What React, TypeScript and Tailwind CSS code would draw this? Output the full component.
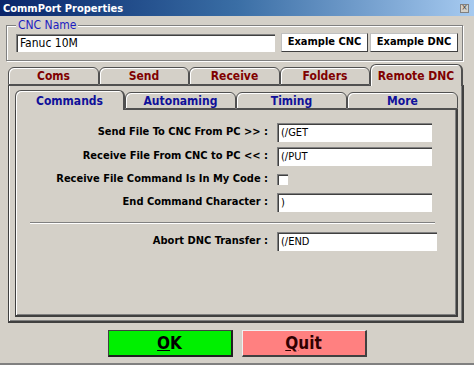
import React from 'react'

const outerTabs = [
  { label: 'Coms', w: 'w-[91px]' },
  { label: 'Send', w: 'w-[90px]' },
  { label: 'Receive', w: 'w-[91px]' },
  { label: 'Folders', w: 'w-[90px]' },
  { label: 'Remote DNC', w: 'w-[93px]', active: true },
]

const innerTabs = [
  { label: 'Commands', w: 'w-[110px]', active: true },
  { label: 'Autonaming', w: 'w-[111px]' },
  { label: 'Timing', w: 'w-[111px]' },
  { label: 'More', w: 'w-[111px]' },
]

function OuterTab({ label, w, active }: { label: string; w: string; active?: boolean }) {
  return (
    <div
      className={
        active
          ? `${w} h-[22px] -mb-px relative z-10 flex items-center justify-center bg-[#d4d0c8] border-t border-l border-r-2 border-[#505050] rounded-t-[6px] shadow-[inset_1px_1px_0_#ffffff] text-[12px] font-bold text-[#800000]`
          : `${w} h-[18px] flex items-center justify-center bg-[#d4d0c8] border border-[#505050] rounded-t-[6px] shadow-[inset_1px_1px_0_#ffffff] text-[12px] font-bold text-[#800000]`
      }
    >
      {label}
    </div>
  )
}

function InnerTab({ label, w, active }: { label: string; w: string; active?: boolean }) {
  return (
    <div
      className={
        active
          ? `${w} h-[20px] -mb-px relative z-10 flex items-center justify-center bg-[#d4d0c8] border-t border-l border-r-2 border-[#505050] rounded-t-[6px] shadow-[inset_1px_1px_0_#ffffff] text-[12px] font-bold text-[#10109a]`
          : `${w} h-[17px] flex items-center justify-center bg-[#d4d0c8] border border-[#505050] rounded-t-[6px] shadow-[inset_1px_1px_0_#ffffff] text-[12px] font-bold text-[#10109a]`
      }
    >
      {label}
    </div>
  )
}

function Field({ value, w = 'w-[155px]' }: { value: string; w?: string }) {
  return (
    <div className={`${w} h-[19px] bg-white border-t border-l border-[#808080] shadow-[inset_1px_1px_0_#404040] flex items-center pl-[3px] text-[11px] text-black`}>
      {value}
    </div>
  )
}

function Row({ label, children, mt }: { label: string; children: React.ReactNode; mt: string }) {
  return (
    <div className={`${mt} flex items-center gap-[9px]`}>
      <div className="w-[252px] text-right text-[11px] font-bold text-black whitespace-nowrap">{label}</div>
      {children}
    </div>
  )
}

export default function App() {
  return (
    <div className="w-[474px] h-[365px] bg-[#d4d0c8] flex flex-col overflow-hidden border-b-2 border-[#808080] font-['DejaVu_Sans_Condensed','Liberation_Sans',sans-serif]">
      {/* title bar */}
      <div className="h-[16px] flex items-center justify-between pl-[3px] pr-[5px] bg-linear-to-r from-[#0a246a] via-[#3a6ea5] to-[#a6caf0]">
        <span className="text-[11px] font-bold text-white leading-none">CommPort Properties</span>
        <div className="w-[9px] h-[9px] bg-[#d4d0c8] border border-[#808080] flex items-center justify-center text-[8px] leading-none text-[#404040]">
          ×
        </div>
      </div>

      {/* CNC name group */}
      <div className="relative mt-[9px] ml-[6px] w-[457px] h-[36px] border border-[#808080] shadow-[inset_1px_1px_0_#ffffff,1px_1px_0_#ffffff]">
        <span className="absolute left-[9px] -top-[8px] px-[2px] bg-[#d4d0c8] text-[12px] leading-[14px] text-[#1c1cc0]">
          CNC Name
        </span>
        <div className="flex items-center pl-[9px] pt-[7px]">
          <div className="w-[259px] h-[18px] bg-white border-t border-l border-[#808080] shadow-[inset_1px_1px_0_#404040] flex items-center pl-[3px] text-[12px] text-black">
            Fanuc 10M
          </div>
          <button className="ml-[6px] w-[87px] h-[19px] bg-white border border-[#c0c0c0] border-r-[#404040] border-b-[#404040] text-[11px] font-bold text-black">
            Example CNC
          </button>
          <button className="ml-[2px] w-[88px] h-[19px] bg-white border border-[#c0c0c0] border-r-[#404040] border-b-[#404040] text-[11px] font-bold text-black">
            Example DNC
          </button>
        </div>
      </div>

      {/* outer tabs */}
      <div className="mt-[2px] ml-[8px] flex items-end h-[22px]">
        {outerTabs.map((t) => (
          <OuterTab key={t.label} {...t} />
        ))}
      </div>
      <div className="ml-[8px] w-[456px] h-[238px] border-l border-r-2 border-b-2 border-[#404040] border-t border-t-[#505050] shadow-[inset_1px_0_0_#ffffff,inset_-1px_-1px_0_#808080] pl-[6px] pt-[3px]">
        {/* inner tabs */}
        <div className="flex items-end h-[20px]">
          {innerTabs.map((t) => (
            <InnerTab key={t.label} {...t} />
          ))}
        </div>
        <div className="w-[443px] h-[208px] border-l border-r-2 border-b-2 border-[#404040] border-t border-t-[#505050] shadow-[inset_1px_0_0_#ffffff,inset_-1px_-1px_0_#808080] flex flex-col">
          <Row label="Send File To CNC From PC >> :" mt="mt-[13px]">
            <Field value="(/GET" />
          </Row>
          <Row label="Receive File From CNC to PC << :" mt="mt-[5px]">
            <Field value="(/PUT" />
          </Row>
          <Row label="Receive File Command Is In My Code :" mt="mt-[5px]">
            <div className="h-[17px] flex items-center">
              <div className="w-[11px] h-[11px] bg-white border-t border-l border-[#808080] shadow-[inset_1px_1px_0_#404040]" />
            </div>
          </Row>
          <Row label="End Command Character :" mt="mt-[5px]">
            <Field value=")" />
          </Row>
          <div className="mt-[10px] ml-[14px] w-[405px] border-t border-[#808080] border-b border-b-white" />
          <Row label="Abort DNC Transfer :" mt="mt-[8px]">
            <Field value="(/END" w="w-[160px]" />
          </Row>
        </div>
      </div>

      {/* bottom buttons */}
      <div className="mt-[7px] flex justify-center gap-[9px]">
        <button className="w-[125px] h-[27px] bg-[#00f000] border border-[#404040] border-r-2 border-b-2 border-r-[#202020] border-b-[#202020] text-[17px] font-bold text-black">
          <span className="underline">O</span>K
        </button>
        <button className="w-[125px] h-[27px] bg-[#ff8080] border border-[#f0f0f0] border-r-2 border-b-2 border-r-[#404040] border-b-[#404040] text-[17px] font-bold text-[#300000]">
          <span className="underline">Q</span>uit
        </button>
      </div>
    </div>
  )
}
